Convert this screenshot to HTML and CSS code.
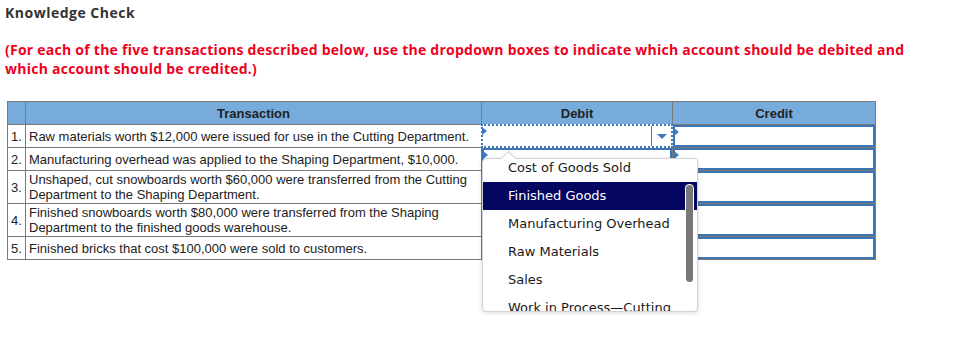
FILE: index.html
```html
<!DOCTYPE html>
<html lang="en">

<head>
    <meta charset="UTF-8">
    <title>Knowledge Check</title>
    <link rel="stylesheet" href="styles.css">
</head>

<body>
    <div class="page">
        <h2 class="title">Knowledge Check</h2>
        <p class="instructions">(For each of the five transactions described below, use the dropdown boxes to indicate which account should be debited and which account should be credited.)</p>

        <div class="sheet">
            <table class="journal">
                <thead>
                    <tr>
                        <th class="num"></th>
                        <th class="desc">Transaction</th>
                        <th class="acct">Debit</th>
                        <th class="acct credit">Credit</th>
                    </tr>
                </thead>
                <tbody>
                    <tr class="short">
                        <td class="num">1.</td>
                        <td class="desc">Raw materials worth $12,000 were issued for use in the Cutting Department.</td>
                        <td class="pick"><div class="select active"><span class="mark"></span><span class="caret"></span></div></td>
                        <td class="pick"><div class="select"><span class="mark"></span></div></td>
                    </tr>
                    <tr class="short">
                        <td class="num">2.</td>
                        <td class="desc">Manufacturing overhead was applied to the Shaping Department, $10,000.</td>
                        <td class="pick"><div class="select"><span class="mark"></span></div></td>
                        <td class="pick"><div class="select"><span class="mark"></span></div></td>
                    </tr>
                    <tr class="tall">
                        <td class="num">3.</td>
                        <td class="desc">Unshaped, cut snowboards worth $60,000 were transferred from the Cutting Department to the Shaping Department.</td>
                        <td class="pick"><div class="select"><span class="mark"></span></div></td>
                        <td class="pick"><div class="select"><span class="mark"></span></div></td>
                    </tr>
                    <tr class="tall">
                        <td class="num">4.</td>
                        <td class="desc">Finished snowboards worth $80,000 were transferred from the Shaping Department to the finished goods warehouse.</td>
                        <td class="pick"><div class="select"><span class="mark"></span></div></td>
                        <td class="pick"><div class="select"><span class="mark"></span></div></td>
                    </tr>
                    <tr class="short">
                        <td class="num">5.</td>
                        <td class="desc">Finished bricks that cost $100,000 were sold to customers.</td>
                        <td class="pick"><div class="select"><span class="mark"></span></div></td>
                        <td class="pick"><div class="select"><span class="mark"></span></div></td>
                    </tr>
                </tbody>
            </table>

            <div class="listbox">
                <span class="notch"></span>
                <ul class="options">
                    <li>Cost of Goods Sold</li>
                    <li class="selected">Finished Goods</li>
                    <li>Manufacturing Overhead</li>
                    <li>Raw Materials</li>
                    <li>Sales</li>
                    <li>Work in Process—Cutting</li>
                </ul>
                <span class="thumb"></span>
            </div>
        </div>
    </div>
</body>

</html>
```

FILE: styles.css
```css
body {
    margin: 0;
    padding: 0;
    background-color: #fff;
}

.page {
    box-sizing: border-box;
    min-height: 339px;
    padding: 4px 0 0 5px;
}

.title {
    margin: 0;
    font-family: "Open Sans", sans-serif;
    font-size: 14px;
    line-height: 18px;
    font-weight: bold;
    letter-spacing: 0.5px;
    color: #333;
}

.instructions {
    margin: 18px 0 0 0;
    width: 910px;
    font-family: "Open Sans", sans-serif;
    font-size: 14px;
    line-height: 19px;
    font-weight: bold;
    letter-spacing: 0.25px;
    color: #f0001c;
}

.sheet {
    position: relative;
    min-height: 220px;
    margin: 23px 0 0 2px;
}

.journal {
    border-collapse: collapse;
    font-family: "Liberation Sans", Arial, sans-serif;
    font-size: 13px;
    color: #222;
}

.journal th,
.journal td {
    border: 1px solid #7a7a7a;
    padding: 0;
}

.journal th {
    height: 22px;
    background-color: #76abdc;
    font-weight: bold;
    text-align: center;
}

.journal th.num,
.journal td.num {
    width: 17px;
    text-align: center;
}

.journal th.desc {
    width: 455px;
}

.journal th.acct {
    width: 190px;
}

.journal th.credit {
    width: 202px;
}

.journal td.desc {
    padding: 0 4px 0 3px;
    line-height: 15px;
}

.short td {
    height: 22px;
}

.tall td {
    height: 32px;
}

.journal td.pick {
    position: relative;
    vertical-align: top;
}

.select {
    position: absolute;
    top: 0;
    left: 0;
    right: 0;
    bottom: 0;
    border: 2px solid #3e74b2;
    background-color: #fff;
}

.select.active {
    border: 2px dotted #3b7bc4;
    top: -1px;
    left: -1px;
    right: -1px;
    bottom: -1px;
}

.mark {
    position: absolute;
    top: 1px;
    left: -1px;
    width: 0;
    height: 0;
    border-top: 4px solid transparent;
    border-bottom: 4px solid transparent;
    border-left: 5px solid #3b7bc4;
}

.caret {
    position: absolute;
    top: 0;
    right: 0;
    bottom: 0;
    width: 19px;
    border-left: 1px solid #3b7bc4;
}

.caret::after {
    content: "";
    position: absolute;
    top: 8px;
    left: 5px;
    border-left: 5px solid transparent;
    border-right: 5px solid transparent;
    border-top: 5px solid #3b7bc4;
}

.listbox {
    position: absolute;
    left: 475px;
    top: 57px;
    width: 214px;
    height: 152px;
    border: 1px solid #d2d2d2;
    border-radius: 4px;
    background-color: #fff;
    box-shadow: 0 1px 4px rgba(0, 0, 0, 0.15);
}

.notch {
    position: absolute;
    top: -6px;
    left: 20px;
    width: 10px;
    height: 10px;
    background-color: #fff;
    border-top: 1px solid #d2d2d2;
    border-left: 1px solid #d2d2d2;
    transform: rotate(45deg);
}

.options {
    list-style: none;
    margin: 0;
    padding: 0;
    height: 152px;
    overflow: hidden;
    border-radius: 4px;
    font-family: "DejaVu Sans", Verdana, sans-serif;
    font-size: 13px;
    color: #1a1a1a;
}

.options li {
    height: 28px;
    line-height: 28px;
    padding-left: 25px;
    white-space: nowrap;
    position: relative;
    top: -5px;
}

.options li.selected {
    background-color: #050660;
    color: #fff;
}

.thumb {
    position: absolute;
    top: 26px;
    right: 4px;
    width: 7px;
    height: 97px;
    border-radius: 4px;
    background-color: #777;
    box-shadow: 0 0 0 1px #fff;
}
```
